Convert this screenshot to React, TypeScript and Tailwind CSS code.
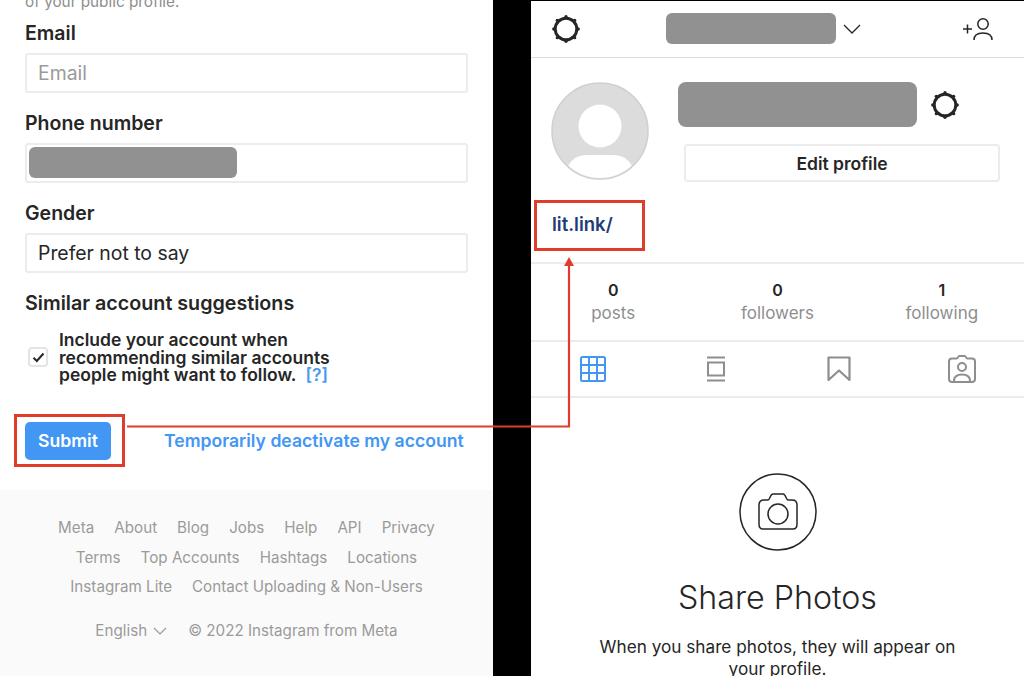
import React from 'react';

const footerRows = [
  ['Meta', 'About', 'Blog', 'Jobs', 'Help', 'API', 'Privacy'],
  ['Terms', 'Top Accounts', 'Hashtags', 'Locations'],
  ['Instagram Lite', 'Contact Uploading & Non-Users'],
];

const stats = [
  { value: '0', label: 'posts' },
  { value: '0', label: 'followers' },
  { value: '1', label: 'following' },
];

const GearIcon: React.FC<{ size: number }> = ({ size }) => (
  <svg width={size} height={size} viewBox="0 0 28 28" fill="none" className="shrink-0">
    <circle cx="14" cy="14" r="10.8" stroke="#262626" strokeWidth="3" />
    {[0, 45, 90, 135, 180, 225, 270, 315].map(deg => (
      <circle
        key={deg}
        cx={14 + 12.2 * Math.cos((deg * Math.PI) / 180)}
        cy={14 + 12.2 * Math.sin((deg * Math.PI) / 180)}
        r="1.7"
        fill="#262626"
      />
    ))}
  </svg>
);

const Field: React.FC<{ label: string; children?: React.ReactNode }> = ({ label, children }) => (
  <div>
    <div className="h-[40px] pt-[2px] flex items-center text-[19.5px] font-semibold text-[#262626]">{label}</div>
    <div className="h-[40px] rounded-[3px] border-2 border-[#ececec] bg-white flex items-center text-[19.4px]">
      {children}
    </div>
  </div>
);

const LeftPanel: React.FC = () => (
  <div className="w-[493px] h-[676px] bg-white flex flex-col overflow-hidden shrink-0">
    <div className="px-[25px] flex-1">
      <div className="h-[13px] -mt-[5px] text-[15.3px] leading-[13px] text-[#8e8e8e]">of your public profile.</div>
      <div className="w-[443px] flex flex-col gap-[10px] pt-[5px]">
        <Field label="Email">
          <span className="pl-[11px] pt-[2px] text-[#9a9a9a]">Email</span>
        </Field>
        <Field label="Phone number">
          <div className="ml-[2px] w-[208px] h-[31px] -mt-px rounded-[6px] bg-[#919191]" />
        </Field>
        <Field label="Gender">
          <span className="pl-[11px] pt-[2px] text-[#262626]">Prefer not to say</span>
        </Field>
      </div>
      <div className="mt-[10px] h-[40px] pt-[2px] flex items-center text-[19.7px] font-semibold text-[#262626] whitespace-nowrap">
        Similar account suggestions
      </div>
      <div className="mt-[8px] flex items-center">
        <div className="ml-[3px] w-[20px] h-[20px] rounded-[4px] border-2 border-[#e4e4e4] flex items-center justify-center">
          <svg width="13" height="11" viewBox="0 0 13 11" fill="none">
            <path d="M1.5 5.8 L4.8 9 L11.5 1.5" stroke="#262626" strokeWidth="2" />
          </svg>
        </div>
        <div className="ml-[11px] text-[17.5px] leading-[17.5px] font-semibold text-[#262626] whitespace-nowrap">
          Include your account when
          <br />
          recommending similar accounts
          <br />
          people might want to follow.
          <span className="ml-[9px] text-[#4a9bf0]">[?]</span>
        </div>
      </div>
      <div className="mt-[38px] flex items-center">
        <button className="w-[86px] h-[38px] pt-[2px] rounded-[5px] bg-[#4296f4] text-white text-[17.6px] font-semibold">
          Submit
        </button>
        <span className="ml-[53px] pt-[2px] text-[17.6px] font-semibold text-[#4296f4] whitespace-nowrap">
          Temporarily deactivate my account
        </span>
      </div>
    </div>
    <div className="h-[186px] shrink-0 bg-[#fafafa] pt-[27px] text-[15.2px] text-[#9a9a9a]">
      {footerRows.map(row => (
        <div key={row[0]} className="h-[29.5px] flex justify-center gap-[20px]">
          {row.map(item => (
            <span key={item}>{item}</span>
          ))}
        </div>
      ))}
      <div className="mt-[14px] flex justify-center items-center">
        <span>English</span>
        <svg width="14" height="8" viewBox="0 0 14 8" fill="none" className="ml-[6px]">
          <path d="M1 1 L7 7 L13 1" stroke="#9a9a9a" strokeWidth="1.2" />
        </svg>
        <span className="ml-[21px]">© 2022 Instagram from Meta</span>
      </div>
    </div>
  </div>
);

const RightPanel: React.FC = () => (
  <div className="w-[493px] h-[675px] mt-px ml-[38px] bg-white flex flex-col overflow-hidden shrink-0">
    <div className="h-[57px] shrink-0 border-b border-[#dbdbdb] flex items-center pl-[21px] pr-[30px]">
      <GearIcon size={28} />
      <div className="ml-[86px] w-[170px] h-[31px] rounded-[6px] bg-[#919191] -mt-[2px]" />
      <svg width="18" height="10" viewBox="0 0 18 10" fill="none" className="ml-[7px] -mt-[1px]">
        <path d="M1 1 L9 9 L17 1" stroke="#262626" strokeWidth="1.3" />
      </svg>
      <svg width="32" height="26" viewBox="0 0 32 26" fill="none" className="ml-auto">
        <circle cx="21" cy="8" r="5.2" stroke="#262626" strokeWidth="1.5" />
        <path d="M12 24 C12 19 16 17 21 17 C26 17 30 19 30 24" stroke="#262626" strokeWidth="1.5" />
        <path d="M1 13 H10 M5.5 8.5 V17.5" stroke="#262626" strokeWidth="1.5" />
      </svg>
    </div>
    <div className="flex shrink-0 pt-[24px] pl-[20px]">
      <svg width="98" height="98" viewBox="0 0 98 98" className="shrink-0">
        <defs>
          <clipPath id="avatarClip">
            <circle cx="49" cy="49" r="47" />
          </clipPath>
        </defs>
        <circle cx="49" cy="49" r="48" fill="#dcdcdc" stroke="#cfcfcf" strokeWidth="1.5" />
        <circle cx="49" cy="44" r="21.5" fill="#fff" />
        <rect x="15" y="73" width="68" height="40" rx="20" fill="#fff" clipPath="url(#avatarClip)" />
      </svg>
      <div className="ml-[29px] flex-1">
        <div className="flex items-center">
          <div className="w-[239px] h-[45px] rounded-[8px] bg-[#919191]" />
          <div className="ml-[14px]">
            <GearIcon size={28} />
          </div>
        </div>
        <div className="mt-[17px] ml-[6px] w-[316px] h-[38px] pt-[2px] rounded-[4px] border-2 border-[#ececec] flex items-center justify-center text-[17.5px] font-semibold text-[#262626]">
          Edit profile
        </div>
      </div>
    </div>
    <div className="mt-[31px] shrink-0 pl-[21px] h-[22px] leading-[22px] text-[18.5px] font-semibold text-[#1d3c78]">lit.link/</div>
    <div className="mt-[27px] shrink-0 border-t-2 border-[#ececec] h-[78px] grid grid-cols-3 pt-[15px]">
      {stats.map(stat => (
        <div key={stat.label} className="text-center">
          <div className="text-[16px] leading-[22px] font-semibold text-[#262626]">{stat.value}</div>
          <div className="text-[17px] leading-[24px] text-[#8e8e8e]">{stat.label}</div>
        </div>
      ))}
    </div>
    <div className="shrink-0 border-t-2 border-b-2 border-[#ececec] h-[58px] grid grid-cols-4 items-center justify-items-center">
      <svg width="26" height="26" viewBox="0 0 26 26" fill="none">
        <rect x="1" y="1" width="24" height="24" rx="1.5" stroke="#4296f4" strokeWidth="2" />
        <path d="M9 1 V25 M17 1 V25 M1 9 H25 M1 17 H25" stroke="#4296f4" strokeWidth="2" />
      </svg>
      <svg width="20" height="26" viewBox="0 0 20 26" fill="none">
        <path d="M1 1.5 H19 M1 24.5 H19" stroke="#8e8e8e" strokeWidth="2" />
        <rect x="2" y="6.5" width="16" height="13" stroke="#8e8e8e" strokeWidth="2" />
      </svg>
      <svg width="24" height="26" viewBox="0 0 24 26" fill="none">
        <path d="M1.5 1.5 H22.5 V24 L12 14.5 L1.5 24 Z" stroke="#8e8e8e" strokeWidth="2.2" strokeLinejoin="round" />
      </svg>
      <svg width="28" height="28" viewBox="0 0 28 28" fill="none">
        <path d="M9 3.5 H4 A3 3 0 0 0 1 6.5 V24 A3 3 0 0 0 4 27 H24 A3 3 0 0 0 27 24 V6.5 A3 3 0 0 0 24 3.5 H19 L17 1 H11 Z" stroke="#8e8e8e" strokeWidth="2" strokeLinejoin="round" />
        <circle cx="14" cy="12" r="4" stroke="#8e8e8e" strokeWidth="2" />
        <path d="M6 26 C6 21 9 19.5 14 19.5 C19 19.5 22 21 22 26" stroke="#8e8e8e" strokeWidth="2" />
      </svg>
    </div>
    <div className="shrink-0 flex flex-col items-center pt-[75px]">
      <svg width="78" height="78" viewBox="0 0 78 78" fill="none">
        <circle cx="39" cy="39" r="38" stroke="#262626" strokeWidth="1.5" />
        <path
          d="M25 27 H29 C31 27 31 21 34 21 H44 C47 21 47 27 49 27 H53 C56 27 58 29 58 32 V51 C58 54 57 56 54 56 H24 C21 56 20 54 20 51 V32 C20 29 22 27 25 27 Z"
          stroke="#262626"
          strokeWidth="1.5"
          strokeLinejoin="round"
        />
        <circle cx="39" cy="41" r="10" stroke="#262626" strokeWidth="1.5" />
      </svg>
      <div className="mt-[22px] text-[32.2px] leading-[50px] font-light text-[#262626]">Share Photos</div>
      <div className="mt-[13px] w-[380px] text-center text-[17.2px] leading-[22px] text-[#262626]">
        When you share photos, they will appear on your profile.
      </div>
    </div>
  </div>
);

const App: React.FC = () => (
  <div
    className="relative w-[1024px] h-[676px] bg-black flex items-start overflow-hidden"
    style={{ fontFamily: 'Inter, "Liberation Sans", sans-serif' }}
  >
    <LeftPanel />
    <RightPanel />
    {/* annotation boxes and connector drawn over both panels */}
    <div className="absolute left-[14px] top-[414px] w-[111px] h-[53px] border-[3px] border-[#e03c2c]" />
    <div className="absolute left-[534px] top-[200px] w-[111px] h-[51px] border-[3px] border-[#e03c2c]" />
    <svg className="absolute left-[120px] top-[250px]" width="460" height="180" viewBox="0 0 460 180" fill="none">
      <path d="M7 176.5 H449 V12" stroke="#e03c2c" strokeWidth="2.2" />
      <path d="M449 7 L444 16 H454 Z" fill="#e03c2c" />
    </svg>
  </div>
);

export default App;
